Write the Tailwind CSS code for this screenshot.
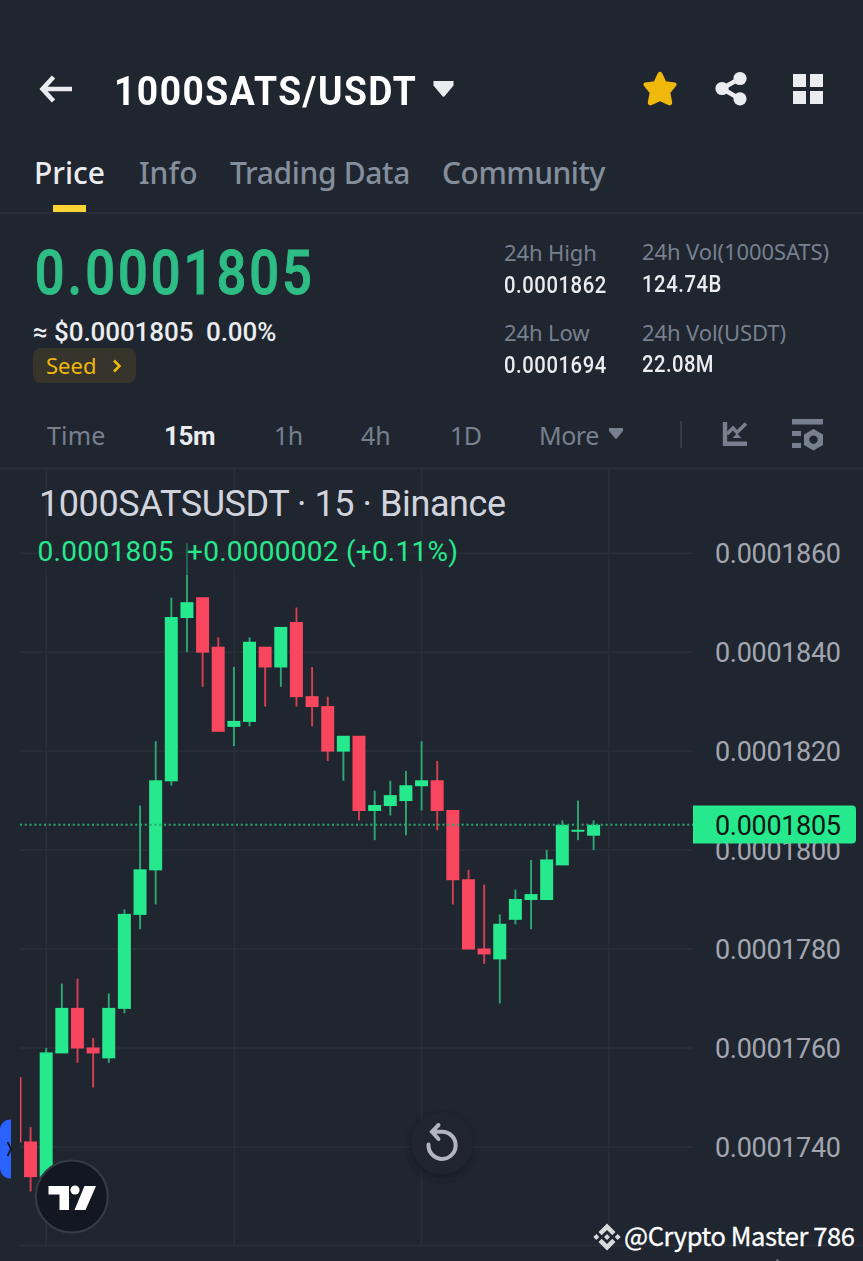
<!DOCTYPE html>
<html lang="en">
  <head>
    <meta charset="UTF-8" />
    <meta name="viewport" content="width=device-width, initial-scale=1.0" />
    <title>1000SATS/USDT</title>
    <script src="https://cdn.jsdelivr.net/npm/@tailwindcss/browser@4"></script>
  </head>
  <body class="bg-[#202630] font-['Roboto',sans-serif] text-[#eaecef]">
    <div class="flex h-[1261px] w-[863px] flex-col overflow-hidden whitespace-nowrap">
      <!-- header -->
      <header class="flex h-[134px] items-center pt-[43px] pl-[38px]">
        <svg class="w-[36px]" height="30" viewBox="0 0 36 30" fill="none" stroke="#eaecef" stroke-width="4.6"><path d="M34 15H4M15.500 3L4.500 15l11 12" /></svg>
        <h1 class="ml-[40px] w-[318px] pt-[6px] text-[40px] leading-none font-bold text-white"><span class="inline-block origin-left scale-x-[.93] tracking-[1.6px]">1000SATS/USDT</span></h1>
        <svg class="w-[22px]" height="17" viewBox="0 0 22 17" fill="#eaecef"><path d="M1.500 1h20v4.500L12.500 16.200q-1 1-2 0L1.500 5.500z" /></svg>
        <svg class="ml-[189px] w-[34px]" height="35" viewBox="0 0 34 35" fill="#f0b90b" stroke="#f0b90b" stroke-width="2" stroke-linejoin="round"><path d="M15.800 2.500q1.200-1.500 2.400 0L22.300 11.200 32 12.500q1.200.700.200 1.800L26.300 21.500 28.200 31.500q0 2-2 1.800L17 29 7.800 33.300q-2 .200-2-1.800L7.700 21.500 1.800 14.300q-1-1.100.200-1.800L11.700 11.200z" /></svg>
        <svg class="ml-[37px] w-[34px]" height="36" viewBox="0 0 34 36" fill="#eaecef" stroke="#eaecef"><path d="M8 17.500L26 7.500M8 17.500L26 28" stroke-width="4.500" /><g stroke="none"><circle cx="8" cy="17.500" r="6.600" /><circle cx="26" cy="7.500" r="6.600" /><circle cx="26" cy="27.800" r="6.600" /></g></svg>
        <div class="ml-[45px] grid grid-cols-2 gap-[4px]">
          <i class="size-[13px] bg-[#eaecef]"></i><i class="size-[13px] bg-[#eaecef]"></i>
          <i class="size-[13px] bg-[#eaecef]"></i><i class="size-[13px] bg-[#eaecef]"></i>
        </div>
      </header>

      <!-- tabs -->
      <nav class="flex h-[80px] border-b-2 border-[#292f39] pl-[34px] font-['Noto_Sans',sans-serif] text-[30px] leading-none font-medium text-[#848e9c]">
        <div class="flex w-[105px] flex-col text-[#eaecef]">
          <span class="pt-[24px]">Price</span>
          <i class="mt-auto ml-[19px] h-[7px] w-[33px] bg-[#fcd535]"></i>
        </div>
        <span class="w-[91px] pt-[24px]">Info</span>
        <span class="w-[212px] pt-[24px] tracking-[-0.35px]">Trading Data</span>
        <span class="pt-[24px] tracking-[-0.5px]">Community</span>
      </nav>

      <!-- price summary -->
      <section class="flex h-[188px] pl-[33px]">
        <div class="w-[471px]">
          <div class="origin-left scale-x-[.86] pt-[29px] pl-[2px] text-[61px] leading-[60px] font-medium tracking-[3.5px] text-[#2ebd85] [-webkit-text-stroke:1px_#2ebd85]">0.0001805</div>
          <div class="mt-[15px] text-[26px] leading-[28px] font-medium tracking-[-0.1px]">≈ $0.0001805&nbsp; 0.00%</div>
          <div class="mt-[2px] flex h-[35px] w-[103px] items-center rounded-lg bg-[#37342b] pl-[13px] font-['Noto_Sans',sans-serif] text-[22px] text-[#f0b90b]">
            Seed
            <svg class="ml-[16px]" width="11" height="14" viewBox="0 0 11 14" fill="none" stroke="#f0b90b" stroke-width="2.500"><path d="M2 1.500L7.500 7 2 12.500" /></svg>
          </div>
        </div>
        <div class="grid grid-cols-[138px_auto] content-start gap-y-[18px] pt-[22px] font-['Noto_Sans',sans-serif] text-[22px] leading-[30px] tracking-[-0.1px] text-[#77808e]">
          <div class="pt-px">24h High<div class="origin-left scale-x-[.88] pt-[5px] font-['Roboto'] text-[23px] leading-[27px] font-medium tracking-[.65px] text-[#eaecef]">0.0001862</div></div>
          <div>24h Vol(1000SATS)<div class="origin-left scale-x-[.88] pt-[5px] font-['Roboto'] text-[23px] leading-[27px] font-medium tracking-[.65px] text-[#eaecef]">124.74B</div></div>
          <div>24h Low<div class="origin-left scale-x-[.88] pt-[5px] font-['Roboto'] text-[23px] leading-[27px] font-medium tracking-[.65px] text-[#eaecef]">0.0001694</div></div>
          <div>24h Vol(USDT)<div class="origin-left scale-x-[.88] pt-[4px] font-['Roboto'] text-[23px] leading-[27px] font-medium tracking-[.5px] text-[#eaecef]">22.08M</div></div>
        </div>
      </section>

      <!-- intervals -->
      <nav class="flex h-[65px] items-center pl-[46px] font-['Noto_Sans',sans-serif] text-[25px] leading-none text-[#77808e]">
        <span class="w-[118px] pt-[2px] pl-px tracking-[0.2px]">Time</span>
        <span class="w-[110px] pt-[3px] font-['Roboto'] text-[26px] font-bold tracking-[-0.4px] text-[#eaecef]">15m</span>
        <span class="w-[87px] pt-[2px] tracking-[-0.5px]">1h</span>
        <span class="w-[89px] pt-[2px]">4h</span>
        <span class="w-[89px] pt-[2px] tracking-[-0.5px]">1D</span>
        <span class="w-[69px] pt-[2px] tracking-[-0.5px]">More</span>
        <svg width="16" height="13" viewBox="0 0 16 13" fill="#77808e"><path d="M1 0h14v3L8.800 10.500q-.800.900-1.600 0L1 3z" /></svg>
        <i class="ml-[56px] h-[27px] w-[2px] bg-[#333b47]"></i>
        <svg class="ml-[40px]" width="27" height="28" viewBox="0 0 27 28" fill="none" stroke="#77808e" stroke-width="4.400"><path d="M3 1v21.800h22" /><path d="M5 13l6-6 4 4.500 9-9" stroke-width="3.600" /><path d="M15 12.500l4.500 4.500h-9z" fill="#77808e" stroke="none" /></svg>
        <svg class="ml-[43px]" width="34" height="34" viewBox="0 0 34 34" fill="#77808e"><path d="M0 1h31v5.500H0zM0 13h9v5H0zM0 25h9v5H0z" /><path fill-rule="evenodd" d="M21.500 11l9.500 5.500v10.500l-9.500 5.500-9.500-5.500V16.500zM21.500 17.500a4.200 4.200 0 1 0 .01 0z" /></svg>
      </nav>

      <!-- chart, one svg unit per pixel -->
      <main class="relative h-[794px]">
        <svg id="chart" class="block" width="863" height="794" viewBox="0 467 863 794">
          <defs>
            <clipPath id="plot"><rect x="20" y="467" width="673" height="794" /></clipPath>
            <filter id="soft" x="-50%" y="-50%" width="200%" height="200%"><feGaussianBlur stdDeviation="3" /></filter>
          </defs>
          <rect y="467" width="863" height="2.500" fill="#292f39" />
          <g id="grid" stroke="#2b2f39" stroke-width="1.500"></g>
          <g id="candles" clip-path="url(#plot)"></g>
          <path d="M20 824.700H693" stroke="#28a870" stroke-width="2" stroke-dasharray="2 2.800" />
          <rect x="36" y="537" width="425" height="38" fill="#202630" fill-opacity=".5" />
          <g fill="#d1d4dc">
            <text x="39" y="515.500" font-size="36" textLength="467">1000SATSUSDT · 15 · Binance</text>
          </g>
          <g fill="#26e88c" font-size="28">
            <text x="37.500" y="561" textLength="136">0.0001805</text>
            <text x="187" y="561" textLength="271">+0.0000002 (+0.11%)</text>
          </g>
          <g id="axis" fill="#a3a6b1" font-size="27"></g>
          <path d="M693 805.500h159a4 4 0 0 1 4 4v30a4 4 0 0 1-4 4H693z" fill="#26e88c" />
          <text x="715" y="834.500" font-size="27" textLength="126" fill="#0c1512">0.0001805</text>

          <!-- drawer handle -->
          <path d="M11 1119.500H10a10 10 0 0 0-10 10v39a10 10 0 0 0 10 10h1z" fill="#2962ff" />
          <path d="M7.500 1142l3.500 7-3.500 7" fill="none" stroke="#131722" stroke-width="1.800" />

          <!-- TradingView badge -->
          <circle cx="71.800" cy="1196.500" r="36" fill="#131722" stroke="#363a45" stroke-width="2.200" />
          <path d="M48.500 1186H69v24H59.500v-15.500h-11zM84.500 1186h11.500l-10.500 24H74.500z" fill="#fff" />
          <circle cx="75" cy="1190" r="4.600" fill="#fff" />

          <!-- reset button -->
          <circle cx="442" cy="1147" r="32" fill="#171b24" opacity=".8" filter="url(#soft)" />
          <circle cx="442" cy="1143.500" r="31" fill="#20242e" />
          <path d="M428.500 1144.500a13.600 13.600 0 1 0 13.500-12.800h-9.500M438.500 1125l-6.500 6.700 6.500 7.300" fill="none" stroke="#b2b5be" stroke-width="4" stroke-linecap="round" />

          <!-- author tag -->
          <g fill="#d9d9d9">
            <path d="M607 1223.500l8.500 8.500-3.200 3.200-5.300-5.300-5.300 5.300-3.200-3.200zM607 1250.500l8.500-8.500-3.200-3.200-5.300 5.300-5.300-5.300-3.200 3.200z" />
            <path d="M607 1234l3 3-3 3-3-3zM596.300 1234l3 3-3 3-3-3zM617.700 1234l3 3-3 3-3-3z" />
          </g>
          <text x="624" y="1246" font-size="25.500" font-family="'Noto Sans CJK SC', sans-serif" textLength="231" fill="#fff" stroke="#fff" stroke-width=".3">@Crypto Master 786</text>
          <rect x="776.500" y="1259.500" width="2" height="2" fill="#8a8e99" />
        </svg>
      </main>
    </div>

    <script>
      // open, high, low, close (last four digits of the price)
      const candles = [
        [1754, 1754, 1741, 1741], [1741, 1744, 1731, 1734], [1734, 1760, 1734, 1759], [1759, 1773, 1759, 1768],
        [1768, 1774, 1757, 1760], [1760, 1762, 1752, 1759], [1758, 1771, 1757, 1768], [1768, 1788, 1767, 1787],
        [1787, 1809, 1784, 1796], [1796, 1822, 1789, 1814], [1814, 1851, 1813, 1847], [1847, 1862, 1840, 1850],
        [1851, 1851, 1833, 1840], [1841, 1843, 1824, 1824], [1825, 1837, 1821, 1826], [1826, 1843, 1825, 1842],
        [1841, 1841, 1829, 1837], [1837, 1845, 1833, 1845], [1846, 1849, 1829, 1831], [1831, 1837, 1825, 1829],
        [1829, 1831, 1818, 1820], [1820, 1823, 1814, 1823], [1823, 1823, 1806, 1808], [1808, 1812, 1802, 1809],
        [1809, 1814, 1807, 1811], [1810, 1816, 1803, 1813], [1813, 1822, 1808, 1814], [1814, 1818, 1804, 1808],
        [1808, 1808, 1789, 1794], [1794, 1796, 1780, 1780], [1780, 1793, 1777, 1779], [1778, 1787, 1769, 1785],
        [1786, 1792, 1785, 1790], [1790, 1798, 1784, 1791], [1790, 1800, 1790, 1798], [1797, 1806, 1797, 1805],
        [1804, 1810, 1802, 1804], [1803, 1806, 1800, 1805],
      ];
      const y = (p) => 553.2 + (1860 - p) * 4.9475;

      let grid = "";
      let axis = "";
      for (const x of [46.3, 234.3, 421.5, 609]) grid += `<path d="M${x} 467V1245"/>`;
      for (let p = 1860; p > 1720; p -= 20) {
        grid += `<path d="M20 ${y(p)}H693"/>`;
        axis += `<text x="715" y="${y(p) + 10}" textLength="126">0.000${p}</text>`;
      }
      grid += '<path d="M20 1245.500H863"/>';

      let bars = "";
      candles.forEach(([o, h, l, c], i) => {
        const x = 14.9 + i * 15.64;
        const up = c >= o;
        const top = y(Math.max(o, c)) - 0.5;
        const height = Math.max(y(Math.min(o, c)) - top + 0.5, 2);
        bars += `<rect x="${x - 0.9}" y="${y(h)}" width="1.9" height="${y(l) - y(h)}" fill="${up ? "#2ba873" : "#d5404f"}"/>`;
        bars += `<rect x="${x - 6.5}" y="${top}" width="13" height="${height}" fill="${up ? "#26e88c" : "#f7465d"}"/>`;
      });

      document.querySelector("#grid").innerHTML = grid;
      document.querySelector("#axis").innerHTML = axis;
      document.querySelector("#candles").innerHTML = bars;
    </script>
  </body>
</html>
